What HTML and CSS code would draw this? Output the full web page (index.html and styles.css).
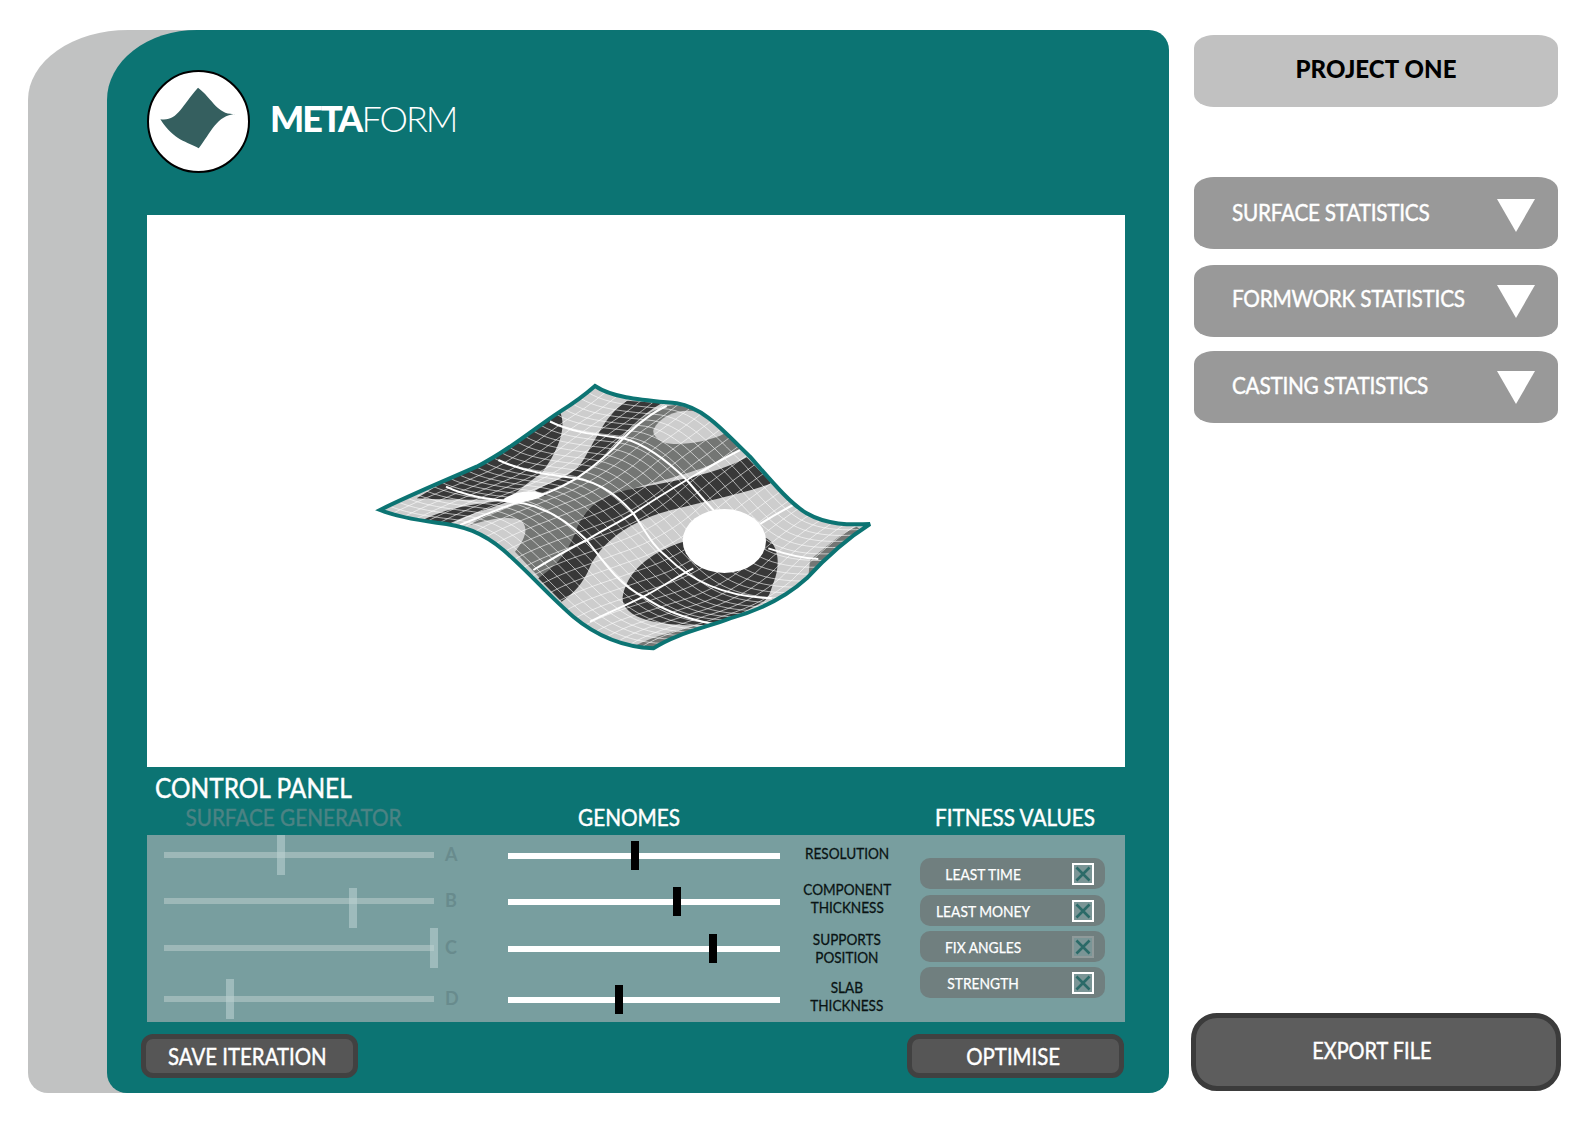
FILE: index.html
```html
<!DOCTYPE html>
<html lang="en">
<head>
<meta charset="utf-8">
<title>Metaform</title>
<link rel="stylesheet" href="styles.css">
</head>
<body>
<main class="app">
  <div class="backplate">
    <section class="main-card">
      <header class="brand">
        <div class="brand-badge">
          <svg class="brand-mark" viewBox="0 0 100 100" aria-hidden="true">
            <path d="M49.500 15.500C65.500 28 68.800 43 87 42C68.800 43 62.200 61.300 50.200 76.600C38.800 69.600 25.500 69.600 11.500 47.300C28.800 49.700 32.200 34.700 49.500 15.500Z"/>
          </svg>
        </div>
        <div class="wordmark"><strong>META</strong>FORM</div>
      </header>

      <div class="viewer">
        <svg class="surface" viewBox="0 0 1560 870" aria-label="Surface preview">
          <defs>
            <clipPath id="surface-clip">
              <path d="M60 420C150 375 260 330 350 290C450 240 530 170 600 125C640 100 680 70 705 48C760 85 850 90 950 100C1040 115 1100 195 1170 260C1240 340 1290 400 1340 430C1400 465 1470 465 1530 462C1470 500 1400 560 1340 625C1280 680 1200 720 1110 745C1030 775 950 790 880 835C780 830 700 790 640 740C570 680 500 600 430 540C370 490 310 465 230 458C170 450 110 440 60 420Z"/>
            </clipPath>
          </defs>
          <g clip-path="url(#surface-clip)">
            <rect width="1560" height="870" fill="#cdcdcd"/>
            <path class="mid" d="M790 200C830 150 880 110 945 105C1000 110 1060 150 1145 235C1060 300 900 330 790 365C720 385 680 410 655 465C625 560 590 590 540 625L465 545C495 510 510 470 480 450C440 435 380 450 330 465C380 420 470 400 560 375C640 330 720 270 790 200Z"/>
            <path class="light" d="M880 180C900 135 960 115 1010 125C1050 140 1075 165 1095 190C1050 215 960 228 920 220C890 210 878 195 880 180Z"/>
            <path class="dark" d="M170 385L600 125C620 170 600 235 545 310C490 345 470 375 430 388C340 390 260 390 170 385Z"/>
            <path class="dark" d="M800 92L905 100C850 130 790 190 720 270C660 325 610 350 555 378L525 362C590 325 640 320 670 270C700 220 725 170 745 145C765 120 780 105 800 92Z"/>
            <path class="dark" d="M180 455C240 420 350 395 450 393L390 415C340 430 290 450 260 465Z"/>
            <path class="dark" d="M1160 262C1060 320 900 340 800 360C720 380 680 410 652 470C622 560 580 590 535 625L605 695C640 670 670 640 690 590C720 530 780 470 900 430C1000 400 1120 380 1235 340Z"/>
            <path class="dark" d="M788 680C800 610 860 550 970 515L1220 505C1260 530 1260 590 1240 640C1230 665 1230 680 1210 695C1180 710 1120 745 1060 762C1000 770 920 765 860 750C810 735 785 710 788 680Z"/>
            <path class="mid" d="M1350 570C1400 530 1440 490 1490 470L1500 478C1450 515 1400 550 1345 620Z"/>
            <path class="mid" d="M830 825C880 800 940 785 1000 768L1020 775C960 800 920 815 880 835Z"/>
            <g id="mesh"></g>
            <path class="mesh-bold" d="M258 350C330 385 420 390 490 400C580 420 640 470 680 510C720 560 770 640 850 680C900 715 970 745 1060 762"/>
            <path class="mesh-bold" d="M415 270C490 305 570 315 650 325C730 340 780 385 820 430C860 490 880 530 920 560C980 620 1080 680 1235 685"/>
            <path class="mesh-bold" d="M570 155C640 190 720 195 790 205C860 225 930 280 980 330C1010 365 1040 400 1065 425M1225 535C1270 550 1320 565 1375 567"/>
            <path class="mesh-bold" d="M300 465C360 440 420 415 480 395C540 380 600 355 650 325C700 290 750 250 790 205C830 165 870 130 920 108"/>
            <path class="mesh-bold" d="M520 600C570 570 630 535 680 510C730 480 780 455 820 430C880 390 930 360 980 330C1040 295 1090 265 1140 240"/>
            <path class="mesh-bold" d="M690 755C740 730 800 705 850 680C900 655 950 620 1000 595M1200 462C1235 440 1270 420 1305 402"/>
            <ellipse class="hole" cx="1093" cy="513" rx="125" ry="96"/>
            <path class="hole" d="M430 388C470 360 520 360 552 372C545 385 500 398 450 398Z"/>
          </g>
          <path class="surface-edge" d="M60 420C150 375 260 330 350 290C450 240 530 170 600 125C640 100 680 70 705 48C760 85 850 90 950 100C1040 115 1100 195 1170 260C1240 340 1290 400 1340 430C1400 465 1470 465 1530 462C1470 500 1400 560 1340 625C1280 680 1200 720 1110 745C1030 775 950 790 880 835C780 830 700 790 640 740C570 680 500 600 430 540C370 490 310 465 230 458C170 450 110 440 60 420Z"/>
        </svg>
      </div>

      <h1 class="panel-title">CONTROL PANEL</h1>
      <div class="panel-heads">
        <h2 class="head head-muted">SURFACE GENERATOR</h2>
        <h2 class="head">GENOMES</h2>
        <h2 class="head head-fitness">FITNESS VALUES</h2>
      </div>

      <div class="panel">
        <div class="cell"><div class="ghost-track"><i class="ghost-handle" style="left:43.3%"></i></div></div>
        <div class="cell letter">A</div>
        <div class="cell"><div class="track"><i class="handle" style="left:46.7%"></i></div></div>
        <div class="cell gene-label up-2"><span>RESOLUTION</span></div>
        <div class="fitness">
          <div class="chip chip-first"><span>LEAST TIME</span><b class="check"><svg viewBox="0 0 22 22"><path d="M3 3L19 19M19 3L3 19"/></svg></b></div>
          <div class="chip"><span>LEAST MONEY</span><b class="check"><svg viewBox="0 0 22 22"><path d="M3 3L19 19M19 3L3 19"/></svg></b></div>
          <div class="chip"><span>FIX ANGLES</span><b class="check check-dim"><svg viewBox="0 0 22 22"><path d="M3 3L19 19M19 3L3 19"/></svg></b></div>
          <div class="chip"><span>STRENGTH</span><b class="check"><svg viewBox="0 0 22 22"><path d="M3 3L19 19M19 3L3 19"/></svg></b></div>
        </div>

        <div class="cell"><div class="ghost-track"><i class="ghost-handle ghost-low" style="left:70%"></i></div></div>
        <div class="cell letter">B</div>
        <div class="cell"><div class="track"><i class="handle" style="left:62.1%"></i></div></div>
        <div class="cell gene-label up-3"><span>COMPONENT<br>THICKNESS</span></div>

        <div class="cell"><div class="ghost-track"><i class="ghost-handle" style="left:100%"></i></div></div>
        <div class="cell letter">C</div>
        <div class="cell"><div class="track"><i class="handle" style="left:75.4%"></i></div></div>
        <div class="cell gene-label"><span>SUPPORTS<br>POSITION</span></div>

        <div class="cell"><div class="ghost-track"><i class="ghost-handle" style="left:24.4%"></i></div></div>
        <div class="cell letter">D</div>
        <div class="cell"><div class="track"><i class="handle" style="left:40.8%"></i></div></div>
        <div class="cell gene-label up-3"><span>SLAB<br>THICKNESS</span></div>
      </div>

      <div class="actions">
        <button class="action"><span>SAVE ITERATION</span></button>
        <button class="action"><span>OPTIMISE</span></button>
      </div>
    </section>
  </div>

  <aside class="sidebar">
    <div class="project">PROJECT ONE</div>
    <div class="stat stat-surface"><span>SURFACE STATISTICS</span><i class="tri"></i></div>
    <div class="stat stat-formwork"><span>FORMWORK STATISTICS</span><i class="tri"></i></div>
    <div class="stat stat-casting"><span>CASTING STATISTICS</span><i class="tri"></i></div>
    <button class="export"><span>EXPORT FILE</span></button>
  </aside>
</main>
<script src="mesh.js"></script>
</body>
</html>
```

FILE: styles.css
```css
* { box-sizing: border-box; }
html, body { margin: 0; padding: 0; background: #fff; }
body {
  width: 1587px;
  height: 1123px;
  overflow: hidden;
  font-family: "Lato", "Liberation Sans", sans-serif;
}
.app { display: flex; padding: 30px 0 0 28px; }

.backplate {
  flex: none;
  width: 1141px;
  height: 1063px;
  padding-left: 79px;
  background: linear-gradient(to right, #c1c2c2 200px, transparent 200px);
  border-radius: 100px 0 0 20px / 70px 0 0 20px;
}
.main-card {
  width: 1062px;
  height: 1063px;
  padding: 0 44px 0 40px;
  background: #0c7473;
  border-radius: 90px 20px 20px 20px / 70px 20px 20px 20px;
  display: flex;
  flex-direction: column;
}

.brand { height: 185px; display: flex; align-items: flex-start; padding-top: 40px; }
.brand-badge {
  width: 103px;
  height: 103px;
  border-radius: 50%;
  background: #fff;
  border: 2px solid #000;
  display: flex;
  align-items: center;
  justify-content: center;
}
.brand-mark { width: 100px; height: 100px; }
.brand-mark path { fill: #355f5f; }
.wordmark {
  margin: 25px 0 0 20px;
  color: #fff;
  font-size: 36px;
  line-height: 46px;
  font-weight: 300;
  letter-spacing: -2px;
}
.wordmark strong { font-weight: 900; }

.viewer { height: 552px; background: #fff; padding: 155px 0 0 213px; }
.surface { display: block; width: 520px; height: 290px; overflow: visible; }
.mid { fill: #747674; }
.dark { fill: #383838; }
.light { fill: #cdcdcd; }
.hole { fill: #fff; }
.surface-edge { fill: none; stroke: #0c7473; stroke-width: 12; stroke-linejoin: miter; stroke-miterlimit: 3; }
.mesh-fine { fill: none; stroke: #fff; stroke-opacity: .7; stroke-width: 2.6; }
.mesh-bold { fill: none; stroke: #fff; stroke-width: 6; }

.panel-title {
  margin: 6px 0 0 8px;
  color: #fff;
  font-size: 26px;
  line-height: 30px;
  font-weight: 400;
  -webkit-text-stroke: .45px #fff;
  transform: scaleX(.94);
  transform-origin: left center;
}
.panel-heads {
  display: grid;
  grid-template-columns: 293px 378px 89px 216px;
  margin-top: 2px;
}
.head {
  margin: 0;
  text-align: center;
  color: #fff;
  font-size: 23px;
  line-height: 24px;
  font-weight: 400;
  -webkit-text-stroke: .45px currentColor;
  transform: scaleX(.9);
}
.head-muted { color: #4c8384; }
.head-fitness { grid-column: 4; }

.panel {
  margin-top: 6px;
  height: 187px;
  padding-left: 17px;
  background: #789e9f;
  display: grid;
  grid-template-columns: 270px 74px 272px 140px 185px;
  grid-template-rows: 46px 47px 51px 43px;
}
.cell { height: 40px; display: flex; align-items: center; }
.ghost-track { position: relative; width: 100%; height: 6px; background: #9db8b8; }
.ghost-handle {
  position: absolute;
  top: -17px;
  width: 8px;
  height: 40px;
  margin-left: -4px;
  background: rgba(190, 212, 212, .55);
}
.ghost-low { top: -10px; }
.letter { padding: 0 0 3px 11px; color: #688b8d; font-size: 18px; font-weight: 700; }
.track { position: relative; width: 100%; height: 6px; margin-top: 2px; background: #fff; }
.handle {
  position: absolute;
  top: -12px;
  width: 8px;
  height: 29px;
  margin-left: -4px;
  background: #000;
}
.gene-label {
  justify-content: center;
  padding-right: 6px;
  text-align: center;
  color: #0a1414;
  font-size: 15.500px;
  line-height: 18px;
  font-weight: 400;
  -webkit-text-stroke: .3px #0a1414;
}
.gene-label span { display: inline-block; transform: scaleX(.875); }
.up-2 { padding-bottom: 4px; }
.up-3 { padding-bottom: 6px; }

.fitness {
  grid-column: 5;
  grid-row: 1 / span 4;
  padding-top: 23px;
  display: flex;
  flex-direction: column;
  gap: 5px;
}
.chip {
  height: 31px;
  padding: 0 11px 0 0;
  display: flex;
  align-items: center;
  border-radius: 10px;
  background: #707f7f;
  color: #fff;
  font-size: 15.500px;
  font-weight: 400;
  -webkit-text-stroke: .25px #fff;
}
.chip-first { margin-bottom: 1px; }
.chip span { flex: 1; text-align: center; padding-right: 29px; transform: scaleX(.89); }
.check {
  width: 22px;
  height: 22px;
  border: 2px solid #fff;
  background: #7a9596;
  display: block;
}
.check-dim { border-color: #8f9a9a; }
.check svg { display: block; width: 18px; height: 18px; }
.check path { fill: none; stroke: #2b6a68; stroke-width: 3.2; }

.actions {
  margin: 12px 0 0 -6px;
  width: 983px;
  display: flex;
  justify-content: space-between;
}
.action {
  width: 217px;
  height: 44px;
  padding: 0 4px 2px 0;
  border: 5px solid #414141;
  border-radius: 12px;
  background: #565656;
  color: #fff;
  font-family: inherit;
  font-size: 24px;
  font-weight: 400;
  white-space: nowrap;
  -webkit-text-stroke: .45px #fff;
}
.action span { display: inline-block; transform: scaleX(.85); }

.sidebar {
  flex: none;
  margin-left: 22px;
  width: 370px;
  height: 1062px;
  display: flex;
  flex-direction: column;
  align-items: center;
}
.project {
  margin-top: 5px;
  width: 364px;
  height: 72px;
  padding-bottom: 6px;
  display: flex;
  align-items: center;
  justify-content: center;
  background: #c1c1c1;
  border-radius: 20px / 13px;
  color: #000;
  font-size: 24px;
  font-weight: 900;
  letter-spacing: .1px;
}
.stat {
  width: 364px;
  height: 72px;
  padding: 0 23px 0 38px;
  display: flex;
  align-items: center;
  background: #999;
  border-radius: 20px / 13px;
  color: #fff;
  font-size: 24px;
  font-weight: 400;
  letter-spacing: -.3px;
  -webkit-text-stroke: .45px #fff;
}
.stat span {
  flex: 1;
  min-width: 0;
  padding-bottom: 4px;
  white-space: nowrap;
  transform: scaleX(.865);
  transform-origin: left center;
}
.stat-surface { margin-top: 70px; }
.stat-formwork { margin-top: 16px; }
.stat-casting { margin-top: 14px; }
.stat-formwork span { padding-bottom: 8px; }
.stat-casting span { padding-bottom: 6px; }
.tri {
  flex: none;
  width: 0;
  height: 0;
  border-left: 19px solid transparent;
  border-right: 19px solid transparent;
  border-top: 33px solid #fff;
}
.stat-surface .tri { margin-top: 5px; }
.stat-formwork .tri { margin-top: 1px; }
.export {
  margin-top: auto;
  margin-bottom: 1px;
  width: 370px;
  height: 78px;
  padding: 0 8px 6px 0;
  border: 5px solid #3b3b3b;
  border-radius: 26px;
  background: #5d5d5d;
  color: #fff;
  font-family: inherit;
  font-size: 24px;
  font-weight: 400;
  -webkit-text-stroke: .45px #fff;
}
.export span { display: inline-block; transform: scaleX(.83); }
```

FILE: mesh.js
```js
(function () {
  var NS = "http://www.w3.org/2000/svg";
  var A = [[60,420],[150,375,260,330,350,290],[450,240,530,170,600,125],[640,100,680,70,705,48]];
  var C = [[880,835],[950,790,1030,775,1110,745],[1200,720,1280,680,1340,625],[1400,560,1470,500,1530,462]];
  var D = [[60,420],[110,440,170,450,230,458],[310,465,370,490,430,540],[500,600,570,680,640,740],[700,790,780,830,880,835]];
  var E = [[705,48],[760,85,850,90,950,100],[1040,115,1100,195,1170,260],[1240,340,1290,400,1340,430],[1400,465,1470,465,1530,462]];

  function sample(edge) {
    var pts = [], p = edge[0];
    for (var s = 1; s < edge.length; s++) {
      var c = edge[s];
      for (var i = 0; i < 40; i++) {
        var t = i / 40, m = 1 - t;
        pts.push([
          m*m*m*p[0] + 3*m*m*t*c[0] + 3*m*t*t*c[2] + t*t*t*c[4],
          m*m*m*p[1] + 3*m*m*t*c[1] + 3*m*t*t*c[3] + t*t*t*c[5]
        ]);
      }
      p = [c[4], c[5]];
    }
    pts.push(p);
    var len = [0];
    for (var j = 1; j < pts.length; j++) {
      len.push(len[j-1] + Math.hypot(pts[j][0]-pts[j-1][0], pts[j][1]-pts[j-1][1]));
    }
    return function (u) {
      var target = u * len[len.length-1], k = 1;
      while (k < len.length-1 && len[k] < target) k++;
      var f = (target - len[k-1]) / (len[k] - len[k-1] || 1);
      return [pts[k-1][0] + (pts[k][0]-pts[k-1][0])*f, pts[k-1][1] + (pts[k][1]-pts[k-1][1])*f];
    };
  }

  var a = sample(A), c = sample(C), d = sample(D), e = sample(E);
  var L = [60,420], T = [705,48], B = [880,835], R = [1530,462];

  function S(u, v) {
    var au = a(u), cu = c(u), dv = d(v), ev = e(v), o = [];
    for (var i = 0; i < 2; i++) {
      o.push((1-v)*au[i] + v*cu[i] + (1-u)*dv[i] + u*ev[i]
        - ((1-u)*(1-v)*L[i] + u*(1-v)*T[i] + (1-u)*v*B[i] + u*v*R[i]));
    }
    return o;
  }

  function line(fn) {
    var s = "";
    for (var i = 0; i <= 50; i++) {
      var p = fn(i / 50);
      s += (i ? "L" : "M") + p[0].toFixed(1) + " " + p[1].toFixed(1);
    }
    return s;
  }

  var fine = "", n = 26, k;
  for (k = 1; k < n; k++) {
    (function (q) {
      fine += line(function (t) { return S(q, t); });
      fine += line(function (t) { return S(t, q); });
    })(k / n);
  }

  var path = document.createElementNS(NS, "path");
  path.setAttribute("class", "mesh-fine");
  path.setAttribute("d", fine);
  document.getElementById("mesh").appendChild(path);
})();
```
